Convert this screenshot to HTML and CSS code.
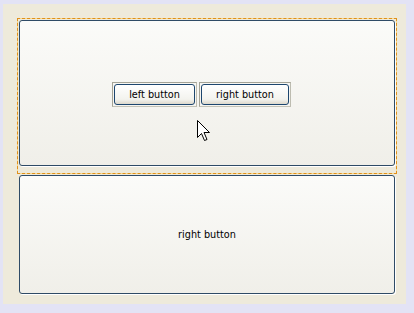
FILE: index.html
```html
<!DOCTYPE html>
<html>
<head>
<meta charset="utf-8">
<link rel="stylesheet" href="styles.css">
</head>
<body>
<div class="frame">
  <div class="focus">
    <div class="panel panel-top">
      <div class="buttons">
        <div class="btn-frame btn-frame-left"><div class="btn">left button</div></div>
        <div class="btn-frame btn-frame-right"><div class="btn">right button</div></div>
      </div>
      <svg class="cursor" width="14" height="23" viewBox="0 0 14 23">
        <path d="M0.5 0.5 V17.5 L4.5 13.5 L7.5 20.5 L10 19.5 L7 12.5 H12.5 Z" fill="#ffffff" stroke="#000000" stroke-width="1" stroke-linejoin="miter"/>
      </svg>
    </div>
  </div>
  <div class="panel panel-bottom">
    <span class="label">right button</span>
  </div>
</div>
</body>
</html>
```
FILE: styles.css
```css
html, body {
  margin: 0;
  padding: 0;
}
body {
  background: #e3e3f5;
  width: 414px;
  height: 313px;
  overflow: hidden;
  font-family: "DejaVu Sans", sans-serif;
  font-size: 9.7px;
  color: #000;
}
.frame {
  box-sizing: border-box;
  width: 403px;
  height: 300px;
  margin: 4px 0 0 3px;
  padding: 14px 0 0 14px;
  background: #eeeadb;
}
.focus {
  box-sizing: border-box;
  width: 380px;
  height: 156px;
  border: 1px dashed #e0901c;
  background: linear-gradient(#eeeadb, #eeeadb) padding-box, #f7d98e;
  padding: 1px;
}
.panel {
  box-sizing: border-box;
  width: 376px;
  border: 1px solid #2f4b66;
  border-radius: 3px;
  background: linear-gradient(#fbfbf9, #f0efe9);
  box-shadow: 1px 1px 0 #ffffff;
}
.panel-top {
  position: relative;
  height: 146px;
  padding: 61px 0 0 92px;
}
.panel-bottom {
  height: 119px;
  margin: 1px 0 0 2px;
  display: flex;
  align-items: center;
  justify-content: center;
}
.buttons {
  display: flex;
  gap: 2px;
}
.btn-frame {
  box-sizing: border-box;
  height: 25px;
  border: 1px solid #a4a396;
  border-right-color: #bdbcb0;
  border-bottom-color: #c3c2b6;
  padding: 1px;
}
.btn-frame-left {
  width: 85px;
}
.btn-frame-right {
  width: 92px;
}
.btn {
  box-sizing: border-box;
  height: 21px;
  border: 1px solid #1d466e;
  border-radius: 3px;
  background: linear-gradient(#ffffff, #f3f3ee 75%, #dcd8cc);
  display: flex;
  align-items: center;
  justify-content: center;
  padding-bottom: 1px;
}
.cursor {
  position: absolute;
  left: 177px;
  top: 99px;
}
```
